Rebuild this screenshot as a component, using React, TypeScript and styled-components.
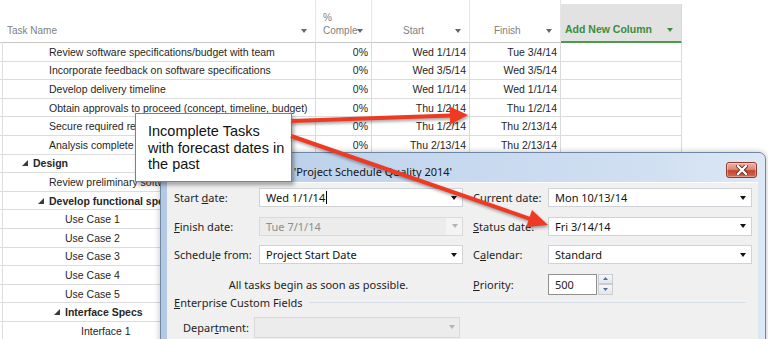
import styled, { createGlobalStyle } from 'styled-components'

const GlobalStyle = createGlobalStyle`
  html, body { margin: 0; padding: 0; background: #ffffff; }
  body { overflow: hidden; }
`

type Task = {
    name: string
    level: number
    toggle?: boolean
    bold?: boolean
    pct?: string
    start?: string
    finish?: string
}

// rows from "Design" down sit under the dialog, so only their names show
const tasks: Task[] = [
    { name: 'Review software specifications/budget with team', level: 2, pct: '0%', start: 'Wed 1/1/14', finish: 'Tue 3/4/14' },
    { name: 'Incorporate feedback on software specifications', level: 2, pct: '0%', start: 'Wed 3/5/14', finish: 'Wed 3/5/14' },
    { name: 'Develop delivery timeline', level: 2, pct: '0%', start: 'Wed 1/1/14', finish: 'Wed 1/1/14' },
    { name: 'Obtain approvals to proceed (concept, timeline, budget)', level: 2, pct: '0%', start: 'Thu 1/2/14', finish: 'Thu 1/2/14' },
    { name: 'Secure required resources', level: 2, pct: '0%', start: 'Thu 1/2/14', finish: 'Thu 2/13/14' },
    { name: 'Analysis complete', level: 2, pct: '0%', start: 'Thu 2/13/14', finish: 'Thu 2/13/14' },
    { name: 'Design', level: 1, toggle: true, bold: true },
    { name: 'Review preliminary software specifications', level: 2 },
    { name: 'Develop functional specifications', level: 2, toggle: true, bold: true },
    { name: 'Use Case 1', level: 3 },
    { name: 'Use Case 2', level: 3 },
    { name: 'Use Case 3', level: 3 },
    { name: 'Use Case 4', level: 3 },
    { name: 'Use Case 5', level: 3 },
    { name: 'Interface Specs', level: 3, toggle: true, bold: true },
    { name: 'Interface 1', level: 4 },
]

const App = () => {
    return (
        <Page>
            <GlobalStyle />
            <Sheet>
                <HeadRow>
                    <HeadCell>
                        Task Name
                        <HeadArrow />
                    </HeadCell>
                    <HeadCell $stack>
                        <span>%</span>
                        <HeadLine>
                            Comple
                            <HeadArrow />
                        </HeadLine>
                    </HeadCell>
                    <HeadCell $pad={31}>
                        Start
                        <HeadArrow />
                    </HeadCell>
                    <HeadCell $pad={24}>
                        Finish
                        <HeadArrow />
                    </HeadCell>
                    <AddHead>
                        Add New Column
                        <HeadArrow $green />
                    </AddHead>
                </HeadRow>

                {tasks.map((t) => (
                    <Row key={t.name}>
                        <TaskCell $level={t.level} $bold={t.bold}>
                            <Toggle>
                                {t.toggle && (
                                    <svg width="6" height="6" viewBox="0 0 6 6">
                                        <polygon points="6,0 6,6 0,6" fill="#3a3a3a" />
                                    </svg>
                                )}
                            </Toggle>
                            {t.name}
                        </TaskCell>
                        <NumCell>{t.pct}</NumCell>
                        <NumCell>{t.start}</NumCell>
                        <NumCell>{t.finish}</NumCell>
                        <NumCell />
                    </Row>
                ))}
            </Sheet>

            <Dialog>
                <TitleBar>
                    <TitleText>Project Information for 'Project Schedule Quality 2014'</TitleText>
                    <CloseButton>
                        <svg width="12" height="10" viewBox="0 0 12 10">
                            <path d="M2 1 L10 9 M10 1 L2 9" stroke="#5a1e16" strokeWidth="4" strokeLinecap="square" />
                            <path d="M2 1 L10 9 M10 1 L2 9" stroke="#ffffff" strokeWidth="2.4" strokeLinecap="square" />
                        </svg>
                    </CloseButton>
                </TitleBar>

                <Body>
                    <Form>
                        <Label>Start <Key>d</Key>ate:</Label>
                        <Field>
                            Wed 1/1/14<Caret />
                            <Drop />
                        </Field>
                        <Label $right>Current date:</Label>
                        <Field>
                            Mon 10/13/14
                            <Drop />
                        </Field>

                        <Label><Key>F</Key>inish date:</Label>
                        <Field $disabled>
                            Tue 7/1/14
                            <DropBox>
                                <Drop $disabled />
                            </DropBox>
                        </Field>
                        <Label $right><Key>S</Key>tatus date:</Label>
                        <Field>
                            Fri 3/14/14
                            <Drop />
                        </Field>

                        <Label>Schedu<Key>l</Key>e from:</Label>
                        <Field>
                            Project Start Date
                            <Drop />
                        </Field>
                        <Label $right>C<Key>a</Key>lendar:</Label>
                        <Field>
                            Standard
                            <Drop />
                        </Field>

                        <Note>All tasks begin as soon as possible.</Note>
                        <Label $right><Key>P</Key>riority:</Label>
                        <SpinWrap>
                            <SpinInput>500</SpinInput>
                            <Spinner>
                                <SpinBtn>
                                    <svg width="5" height="3" viewBox="0 0 5 3">
                                        <polygon points="0,3 5,3 2.5,0" fill="#4f6f9a" />
                                    </svg>
                                </SpinBtn>
                                <SpinBtn>
                                    <svg width="5" height="3" viewBox="0 0 5 3">
                                        <polygon points="0,0 5,0 2.5,3" fill="#4f6f9a" />
                                    </svg>
                                </SpinBtn>
                            </Spinner>
                        </SpinWrap>
                    </Form>

                    <Group>
                        <Key>E</Key>nterprise Custom Fields
                        <GroupLine />
                    </Group>

                    <DeptRow>
                        <DeptLabel>Depar<Key>t</Key>ment:</DeptLabel>
                        <Field $disabled $width={206}>
                            <Drop $disabled />
                        </Field>
                    </DeptRow>
                </Body>
            </Dialog>

            <Callout>
                Incomplete Tasks
                <br />
                with forecast dates in
                <br />
                the past
            </Callout>

            <Arrows width="768" height="339" viewBox="0 0 768 339">
                <line x1="291" y1="121" x2="452" y2="115.6" stroke="#ee3a22" strokeWidth="4" />
                <polygon points="468,115 449.6,106.6 450.2,124.6" fill="#ee3a22" />
                <line x1="291" y1="136" x2="530" y2="218.8" stroke="#ee3a22" strokeWidth="4" />
                <polygon points="548,225 532,210 526.2,227" fill="#ee3a22" />
            </Arrows>
        </Page>
    )
}

export default App

const Page = styled.div`
position: relative;
width: 768px;
height: 339px;
overflow: hidden;
background: #ffffff;
font-family: "Liberation Sans", Arial, sans-serif;
`

const Sheet = styled.div`
position: relative;
width: 682px;

&::before {
    content: "";
    position: absolute;
    left: 2px;
    top: 42px;
    bottom: 0;
    border-left: 1px solid #dedede;
}
`

const columns = '316px 56px 98px 91px 121px'

const HeadRow = styled.div`
display: grid;
grid-template-columns: ${columns};
height: 43px;
box-sizing: border-box;
`

const HeadCell = styled.div<{ $stack?: boolean; $pad?: number }>`
display: flex;
flex-direction: ${(p) => (p.$stack ? 'column' : 'row')};
justify-content: ${(p) => (p.$stack ? 'flex-end' : 'flex-start')};
align-items: ${(p) => (p.$stack ? 'flex-start' : 'flex-end')};
box-sizing: border-box;
padding: 0 8px 5px ${(p) => p.$pad ?? 7}px;
border-right: 1px solid #e6e6e6;
border-bottom: 1px solid #c6c6c6;
color: #808080;
font-size: 10px;
line-height: 13px;
`

const HeadLine = styled.div`
display: flex;
align-items: center;
width: 100%;
`

const HeadArrow = styled.span<{ $green?: boolean }>`
margin-left: auto;
margin-bottom: 4px;
width: 0;
height: 0;
border-left: 3.5px solid transparent;
border-right: 3.5px solid transparent;
border-top: 4px solid ${(p) => (p.$green ? '#3f8f3f' : '#666666')};
align-self: flex-end;
`

const AddHead = styled.div`
display: flex;
align-items: flex-end;
box-sizing: border-box;
margin-top: 4px;
padding: 0 8px 5px 4px;
background: #e2e2e2;
border-right: 1px solid #d8d8d8;
border-bottom: 2px solid #4c9a4c;
color: #3c8c3c;
font-size: 10.5px;
font-weight: bold;
line-height: 13px;
`

const Row = styled.div`
display: grid;
grid-template-columns: ${columns};
height: 18.6px;
box-sizing: border-box;
border-bottom: 1px solid #dcdcdc;
font-size: 10.5px;
color: #262626;
`

const TaskCell = styled.div<{ $level: number; $bold?: boolean }>`
display: flex;
align-items: center;
box-sizing: border-box;
padding-left: ${(p) => 6 + p.$level * 16}px;
border-right: 1px solid #dadada;
font-weight: ${(p) => (p.$bold ? 'bold' : 'normal')};
white-space: nowrap;
overflow: hidden;
`

const Toggle = styled.span`
display: flex;
align-items: center;
width: 11px;
flex-shrink: 0;
`

const NumCell = styled.div`
display: flex;
align-items: center;
justify-content: flex-end;
box-sizing: border-box;
padding-right: 3px;
border-right: 1px solid #dadada;
white-space: nowrap;
`

const Dialog = styled.div`
position: absolute;
left: 160px;
top: 152px;
width: 606px;
height: 220px;
box-sizing: border-box;
padding: 0 7px 0 6px;
border: 1px solid #6f87a6;
border-radius: 7px 7px 0 0;
background: linear-gradient(90deg, #b4c9e4 0%, #c4d7ee 40%, #d0dff1 80%, #dce8f5 100%);
box-shadow: 0 0 6px rgba(0, 0, 0, 0.25);
font-family: "Noto Sans", "Open Sans", sans-serif;
color: #1e1e1e;
`

const TitleBar = styled.div`
display: flex;
align-items: flex-start;
height: 29px;
padding-top: 9px;
box-sizing: border-box;
`

const TitleText = styled.div`
padding-left: 5px;
padding-top: 2px;
font-size: 11px;
line-height: 15px;
color: #141414;
white-space: nowrap;
`

const CloseButton = styled.div`
display: flex;
align-items: center;
justify-content: center;
margin-left: auto;
margin-right: 1px;
width: 31px;
height: 16px;
box-sizing: border-box;
border: 1px solid #8e3a2c;
border-radius: 3px;
background: linear-gradient(#eab3a6 0%, #dc8a78 45%, #c4462e 55%, #d36a52 100%);
box-shadow: inset 0 0 0 1px rgba(255, 255, 255, 0.35);
`

const Body = styled.div`
height: 100%;
padding: 6px 6px 0 7px;
background: #f0f0f0;
box-shadow: inset 0 1px 0 #ffffff;
`

const Form = styled.div`
display: grid;
grid-template-columns: 85px 204px 85px 204px;
grid-template-rows: 19px 19px 19px 21px;
row-gap: 9.5px;
align-items: center;
`

const Key = styled.span`
text-decoration: underline;
`

const Label = styled.div<{ $right?: boolean }>`
padding-left: ${(p) => (p.$right ? 10 : 0)}px;
font-size: 11px;
white-space: nowrap;
`

const Field = styled.div<{ $disabled?: boolean; $width?: number }>`
display: flex;
align-items: center;
width: ${(p) => (p.$width ? `${p.$width}px` : 'auto')};
height: ${(p) => (p.$width ? '21px' : '19px')};
box-sizing: border-box;
padding-left: 6px;
border: 1px solid ${(p) => (p.$disabled ? '#d9d9d9' : '#cfd3d8')};
background: ${(p) => (p.$disabled ? '#ececec' : '#ffffff')};
color: ${(p) => (p.$disabled ? '#8c8c8c' : '#111111')};
font-size: 11px;
white-space: nowrap;
`

const DropBox = styled.div`
display: flex;
align-items: center;
justify-content: center;
margin-left: auto;
width: 16px;
height: 100%;
background: #f4f4f4;
`

const Drop = styled.span<{ $disabled?: boolean }>`
margin-left: auto;
margin-right: ${(p) => (p.$disabled ? 4 : 5)}px;
width: 0;
height: 0;
border-left: 3.5px solid transparent;
border-right: 3.5px solid transparent;
border-top: 4px solid ${(p) => (p.$disabled ? '#b4b4b4' : '#111111')};
`

const Caret = styled.span`
display: inline-block;
width: 1px;
height: 13px;
margin-left: 1px;
background: #000000;
`

const Note = styled.div`
grid-column: 1 / 3;
text-align: center;
font-size: 11px;
`

const SpinWrap = styled.div`
display: flex;
align-items: stretch;
height: 21px;
`

const SpinInput = styled.div`
display: flex;
align-items: center;
width: 49px;
box-sizing: border-box;
padding-left: 6px;
border: 1px solid #8f8f8f;
background: #ffffff;
font-size: 11px;
`

const Spinner = styled.div`
display: flex;
flex-direction: column;
margin-left: 1px;
width: 15px;
`

const SpinBtn = styled.div`
display: flex;
align-items: center;
justify-content: center;
flex: 1;
border: 1px solid #c9cdd2;
background: linear-gradient(#f6f7f9, #e3e6ea);
`

const Group = styled.div`
display: flex;
align-items: center;
margin-top: 1px;
font-size: 11px;
line-height: 14px;
white-space: nowrap;
`

const GroupLine = styled.div`
flex: 1;
margin-left: 6px;
margin-right: 6px;
border-top: 1px solid #d8dfe6;
`

const DeptRow = styled.div`
display: flex;
align-items: center;
margin-top: 7px;
`

const DeptLabel = styled.div`
width: 80px;
box-sizing: border-box;
padding-left: 9px;
font-size: 11px;
white-space: nowrap;
`

const Callout = styled.div`
position: absolute;
left: 135px;
top: 113px;
width: 157px;
height: 69px;
box-sizing: border-box;
padding: 9px 0 0 12px;
border: 1.5px solid #e25a44;
background: #ffffff;
box-shadow: 2px 3px 4px rgba(0, 0, 0, 0.35);
font-family: "Liberation Sans", Arial, sans-serif;
font-size: 14.5px;
line-height: 16.7px;
color: #111111;
`

const Arrows = styled.svg`
position: absolute;
left: 0;
top: 0;
pointer-events: none;
filter: drop-shadow(1px 2px 1.5px rgba(0, 0, 0, 0.35));
`
